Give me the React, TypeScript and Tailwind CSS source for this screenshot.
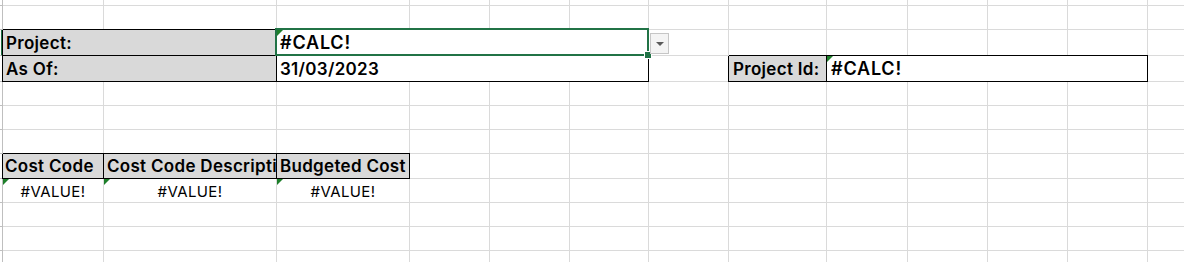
import React from 'react';

const colW = [
  'w-[101px]',
  'w-[173px]',
  'w-[133px]',
  'w-[80px]',
  'w-[80px]',
  'w-[79px]',
  'w-[80px]',
  'w-[98px]',
  'w-[81px]',
  'w-[80px]',
  'w-[80px]',
  'w-[80px]',
];

const cell = 'shrink-0 border-r border-b border-[#dadada]';
const boxed = 'relative shrink-0 border-r border-b border-black shadow-[0_-1px_0_#000,-1px_0_0_#000]';
const label = 'text-[17px] font-semibold tracking-[0.3px] whitespace-nowrap overflow-hidden';
const calc = 'text-[18px] font-semibold tracking-[0.8px]';

function Strip({ green }: { green?: boolean }) {
  return (
    <div
      className={
        green
          ? 'w-[3px] shrink-0 border-r-2 border-b border-r-[#217346] border-b-[#bfbfbf]'
          : 'w-[3px] shrink-0 border-r border-b border-[#bfbfbf]'
      }
    />
  );
}

function Blank({ from, to }: { from: number; to: number }) {
  return (
    <>
      {colW.slice(from, to).map((w, i) => (
        <div key={i} className={`${cell} ${w}`} />
      ))}
    </>
  );
}

function Filler() {
  return <div className="flex-1 border-b border-[#dadada]" />;
}

function ErrTick() {
  return (
    <span className="absolute top-0 left-0 h-0 w-0 border-t-[6px] border-r-[6px] border-t-[#1d7f2a] border-r-transparent" />
  );
}

function EmptyRow({ h }: { h: string }) {
  return (
    <div className={`flex ${h}`}>
      <Strip />
      <Blank from={0} to={12} />
      <Filler />
    </div>
  );
}

export default function App() {
  return (
    <div
      className="w-[1184px] h-[262px] overflow-hidden bg-white text-[15px] leading-none text-black"
      style={{ fontFamily: 'Inter, "Noto Sans", sans-serif' }}
    >
      <EmptyRow h="h-[6px]" />
      <EmptyRow h="h-[24px]" />

      {/* Project row */}
      <div className="flex h-[26px]">
        <Strip green />
        <div className={`${boxed} ${label} w-[274px] bg-[#d9d9d9] flex items-center pl-[3px] pt-px`}>
          Project:
        </div>
        <div className={`${boxed} ${calc} z-10 w-[372px] bg-white flex items-center pl-[3px] pt-px`}>
          <ErrTick />
          #CALC!
          <span className="absolute -top-[2px] -left-[2px] -right-px -bottom-px border-2 border-[#217346]" />
          <span className="absolute -right-[3px] -bottom-[3px] h-[6px] w-[6px] bg-[#217346] outline outline-1 outline-white" />
          <span className="absolute left-[calc(100%+2px)] top-[3px] flex h-[21px] w-[19px] items-center justify-center border border-[#c6c6c6] bg-[#f4f4f4]">
            <span className="h-0 w-0 border-x-[4px] border-t-[4px] border-x-transparent border-t-[#5a5a5a]" />
          </span>
        </div>
        <Blank from={6} to={12} />
        <Filler />
      </div>

      {/* As Of row */}
      <div className="flex h-[26px]">
        <Strip />
        <div className={`${boxed} ${label} w-[274px] bg-[#d9d9d9] flex items-center pl-[3px] pt-px`}>
          As Of:
        </div>
        <div className={`${boxed} ${label} w-[372px] bg-white flex items-center pl-[3px] pt-px`}>
          31/03/2023
        </div>
        <Blank from={6} to={7} />
        <div className={`${boxed} ${label} w-[98px] bg-[#d9d9d9] flex items-center pl-[4px] pt-px`}>
          Project Id:
        </div>
        <div className={`${boxed} ${calc} w-[321px] bg-white flex items-center pl-[4px] pt-px`}>
          <ErrTick />
          #CALC!
        </div>
        <Filler />
      </div>

      <EmptyRow h="h-[24px]" />
      <EmptyRow h="h-[24px]" />
      <EmptyRow h="h-[24px]" />

      {/* header row */}
      <div className="flex h-[25px]">
        <Strip />
        <div className={`${boxed} ${label} w-[101px] bg-[#d9d9d9] flex items-center pl-[2px] pt-px`}>
          Cost Code
        </div>
        <div className={`${boxed} ${label} w-[173px] bg-[#d9d9d9] flex items-center pl-[3px] pt-px`}>
          Cost Code Description
        </div>
        <div className={`${boxed} ${label} w-[133px] bg-[#d9d9d9] flex items-center pl-[3px] pt-px`}>
          Budgeted Cost
        </div>
        <Blank from={3} to={12} />
        <Filler />
      </div>

      {/* values row */}
      <div className="flex h-[24px]">
        <Strip />
        {['w-[101px]', 'w-[173px]', 'w-[133px]'].map((w, i) => (
          <div key={i} className={`${cell} ${w} relative flex items-center justify-center pt-[2px] tracking-[0.4px]`}>
            <ErrTick />
            #VALUE!
          </div>
        ))}
        <Blank from={3} to={12} />
        <Filler />
      </div>

      <EmptyRow h="h-[24px]" />
      <EmptyRow h="h-[24px]" />
      <EmptyRow h="h-[24px]" />
    </div>
  );
}
